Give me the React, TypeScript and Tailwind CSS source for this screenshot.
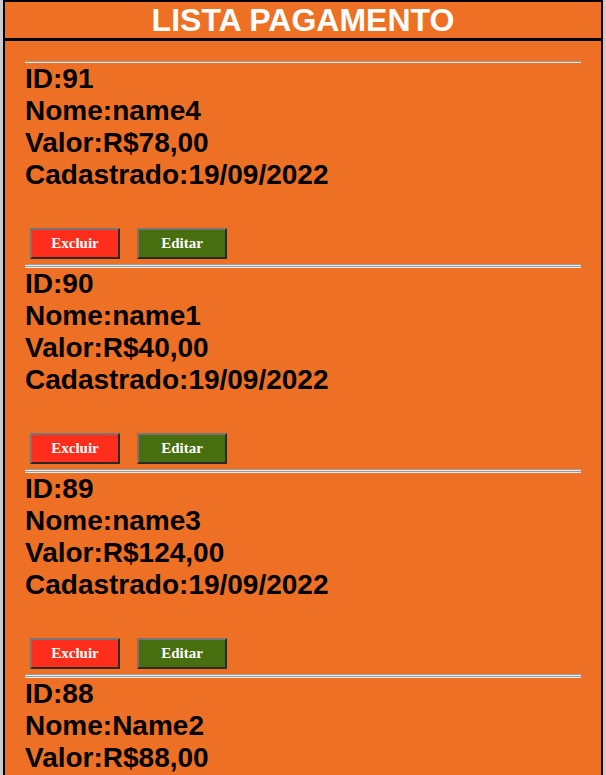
import React from "react";

const items = [
  { id: 91, nome: "name4", valor: "R$78,00", data: "19/09/2022" },
  { id: 90, nome: "name1", valor: "R$40,00", data: "19/09/2022" },
  { id: 89, nome: "name3", valor: "R$124,00", data: "19/09/2022" },
  { id: 88, nome: "Name2", valor: "R$88,00", data: "19/09/2022" },
];

function Rule() {
  return <div className="h-[2px] border-t border-t-[#9a9a9a] border-b border-b-[#eeeeee]" />;
}

export default function App() {
  return (
    <div className="h-[775px] overflow-hidden bg-[#cccccc] px-[3px]">
      <div className="border-2 border-black bg-[#ee7024] min-h-[800px]" style={{ fontFamily: '"Liberation Sans", Arial, sans-serif' }}>
        <div className="h-[39px] flex items-center justify-center border-b-[3px] border-black">
          <span className="text-white font-bold text-[32px] leading-[36px]">LISTA PAGAMENTO</span>
        </div>
        <div className="px-[20px] pt-[20px]">
          {items.map((it) => (
            <div key={it.id}>
              <Rule />
              <div className="text-black font-bold text-[28px] leading-[32px]">
                <div>ID:{it.id}</div>
                <div>Nome:{it.nome}</div>
                <div>Valor:{it.valor}</div>
                <div>Cadastrado:{it.data}</div>
                <div className="h-[32px]" />
              </div>
              <div className="flex gap-[17px] ml-[5px] my-[5px]" style={{ fontFamily: '"Liberation Serif", "Times New Roman", serif' }}>
                <button className="w-[90px] h-[31px] bg-[#ff2e1c] text-white font-bold text-[15px] border-2 border-t-[#767676] border-l-[#767676] border-r-[#2a2a2a] border-b-[#2a2a2a] flex items-center justify-center">
                  Excluir
                </button>
                <button className="w-[90px] h-[31px] bg-[#476e0f] text-white font-bold text-[15px] border-2 border-t-[#767676] border-l-[#767676] border-r-[#2a2a2a] border-b-[#2a2a2a] flex items-center justify-center">
                  Editar
                </button>
              </div>
              <Rule />
            </div>
          ))}
        </div>
      </div>
    </div>
  );
}
